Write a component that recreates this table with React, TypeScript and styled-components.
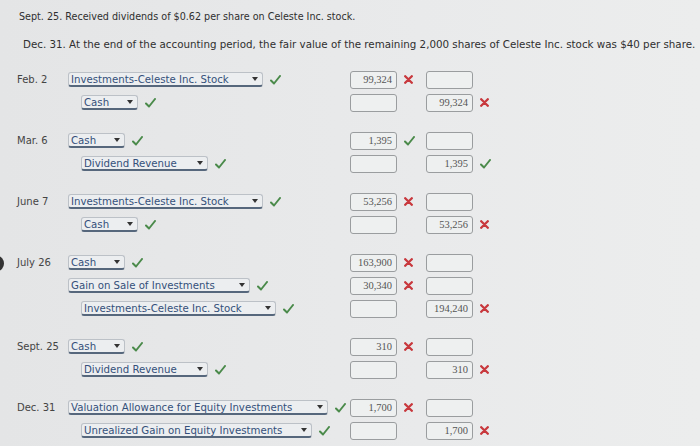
import styled, { createGlobalStyle } from "styled-components";

const GlobalStyle = createGlobalStyle`
  html, body {
    margin: 0;
    padding: 0;
    background: #e7e8e9;
  }
  body {
    font-family: "DejaVu Sans", Verdana, sans-serif;
    color: #333;
  }
`;

const Page = styled.div`
  width: 700px;
  height: 446px;
  overflow: hidden;
  background: linear-gradient(90deg, #e4e5e6 0%, #e9eaeb 60%, #eceded 100%);
  position: relative;
`;

const Intro = styled.div`
  padding: 10px 0 0 19px;
  display: flex;
  flex-direction: column;
  gap: 13px;
`;

const IntroLine = styled.p<{ $indent?: number; $size?: number }>`
  margin: 0;
  padding-left: ${({ $indent }) => $indent ?? 0}px;
  font-size: ${({ $size }) => $size ?? 9.6}px;
  line-height: 14px;
  color: #2f2f2f;
  white-space: nowrap;
`;

const Journal = styled.div`
  padding: 17px 0 0 17px;
  display: flex;
  flex-direction: column;
  gap: 15px;
`;

const Entry = styled.div`
  display: flex;
  flex-direction: column;
`;

const Row = styled.div`
  display: grid;
  grid-template-columns: 51px 282px 76px 76px;
  align-items: center;
  height: 23px;
`;

const DateCell = styled.div`
  font-size: 10px;
  color: #444;
  white-space: nowrap;
`;

const AccountCell = styled.div<{ $indent: boolean }>`
  display: flex;
  align-items: center;
  gap: 7px;
  padding-left: ${({ $indent }) => ($indent ? 13 : 0)}px;
`;

const Select = styled.div<{ $w: number }>`
  position: relative;
  width: ${({ $w }) => $w}px;
  height: 15px;
  box-sizing: border-box;
  border: 1px solid #bcc1c7;
  border-bottom: 2px solid #56677c;
  border-radius: 3px;
  background: #eceef0;
  font-size: 10.2px;
  line-height: 13px;
  color: #34507a;
  padding-left: 2px;
  white-space: nowrap;
  overflow: hidden;
`;

const Arrow = styled.span`
  position: absolute;
  right: 4px;
  top: 4px;
  width: 0;
  height: 0;
  border-left: 3px solid transparent;
  border-right: 3px solid transparent;
  border-top: 4px solid #333;
`;

const AmountCell = styled.div`
  display: flex;
  align-items: center;
  gap: 7px;
`;

const Box = styled.div`
  width: 47px;
  height: 18px;
  box-sizing: border-box;
  border: 1px solid #9a9d9f;
  border-radius: 3px;
  background: #eef0f0;
  font-family: "Liberation Serif", "Times New Roman", serif;
  font-size: 10.5px;
  line-height: 16px;
  text-align: right;
  padding-right: 4px;
  color: #555;
`;

const EdgeIcon = styled.div`
  position: absolute;
  left: -9px;
  top: 256px;
  width: 13px;
  height: 15px;
  border-radius: 50%;
  background: #333;
`;

const Check = () => (
  <svg width="11" height="10" viewBox="0 0 11 10">
    <path d="M1 5.5 L4 8.5 L10 1" fill="none" stroke="#4a8a4a" strokeWidth="2" strokeLinecap="round" strokeLinejoin="round" />
  </svg>
);

const Cross = () => (
  <svg width="9" height="9" viewBox="0 0 9 9">
    <path d="M1.2 1.2 L7.8 7.8 M7.8 1.2 L1.2 7.8" stroke="#c8383d" strokeWidth="2.3" strokeLinecap="round" />
  </svg>
);

type Line = {
  date?: string;
  account: string;
  width: number;
  indent?: boolean;
  debit?: string;
  credit?: string;
  ok?: boolean;
};

const entries: Line[][] = [
  [
    { date: "Feb. 2", account: "Investments-Celeste Inc. Stock", width: 195, debit: "99,324" },
    { account: "Cash", width: 57, indent: true, credit: "99,324" },
  ],
  [
    { date: "Mar. 6", account: "Cash", width: 57, debit: "1,395", ok: true },
    { account: "Dividend Revenue", width: 127, indent: true, credit: "1,395", ok: true },
  ],
  [
    { date: "June 7", account: "Investments-Celeste Inc. Stock", width: 195, debit: "53,256" },
    { account: "Cash", width: 57, indent: true, credit: "53,256" },
  ],
  [
    { date: "July 26", account: "Cash", width: 57, debit: "163,900" },
    { account: "Gain on Sale of Investments", width: 182, debit: "30,340" },
    { account: "Investments-Celeste Inc. Stock", width: 195, indent: true, credit: "194,240" },
  ],
  [
    { date: "Sept. 25", account: "Cash", width: 57, debit: "310" },
    { account: "Dividend Revenue", width: 127, indent: true, credit: "310" },
  ],
  [
    { date: "Dec. 31", account: "Valuation Allowance for Equity Investments", width: 260, debit: "1,700" },
    { account: "Unrealized Gain on Equity Investments", width: 231, indent: true, credit: "1,700" },
  ],
];

export default function App() {
  return (
    <Page>
      <GlobalStyle />
      <EdgeIcon />
      <Intro>
        <IntroLine>Sept. 25. Received dividends of $0.62 per share on Celeste Inc. stock.</IntroLine>
        <IntroLine $indent={4} $size={10.3}>
          Dec. 31. At the end of the accounting period, the fair value of the remaining 2,000 shares of Celeste Inc. stock was $40 per share.
        </IntroLine>
      </Intro>
      <Journal>
        {entries.map((entry, i) => (
          <Entry key={i}>
            {entry.map((line, j) => (
              <Row key={j}>
                <DateCell>{line.date ?? ""}</DateCell>
                <AccountCell $indent={!!line.indent}>
                  <Select $w={line.width}>
                    {line.account}
                    <Arrow />
                  </Select>
                  <Check />
                </AccountCell>
                <AmountCell>
                  <Box>{line.debit ?? ""}</Box>
                  {line.debit && (line.ok ? <Check /> : <Cross />)}
                </AmountCell>
                <AmountCell>
                  <Box>{line.credit ?? ""}</Box>
                  {line.credit && (line.ok ? <Check /> : <Cross />)}
                </AmountCell>
              </Row>
            ))}
          </Entry>
        ))}
      </Journal>
    </Page>
  );
}
